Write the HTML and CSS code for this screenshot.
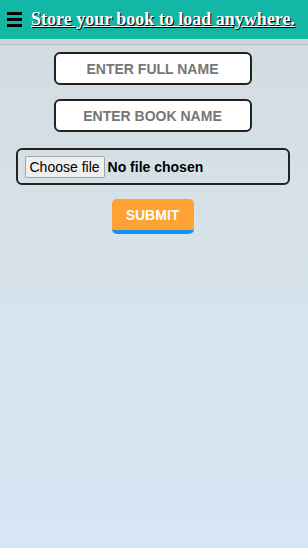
FILE: index.html
```html
<!DOCTYPE html>
<html lang="en">
<head>
  <meta charset="UTF-8">
  <meta name="viewport" content="width=device-width, initial-scale=1.0">
  <title>Store Book</title>
  <link rel="stylesheet" href="styles.css">
</head>
<body>

  <header class="topbar">
    <span class="menu-icon">
      <span></span><span></span><span></span>
    </span>
    <a class="title" href="#">Store your book to load anywhere.</a>
  </header>

  <form class="book-form">
    <input class="text-field" type="text" placeholder="ENTER FULL NAME">
    <input class="text-field" type="text" placeholder="ENTER BOOK NAME">
    <div class="file-box">
      <label class="file-btn" for="book-file">Choose file</label>
      <span class="file-name">No file chosen</span>
      <input id="book-file" class="file-input" type="file">
    </div>
    <button type="submit" class="submit-btn">SUBMIT</button>
  </form>

</body>
</html>
```

FILE: styles.css
```css
html {
  min-height: 100%;
  background: linear-gradient(180deg, #d1dbdf 0%, #d7e2ea 45%, #d6e6f5 100%);
}

body {
  margin: 0;
  font-family: 'Liberation Sans', Arial, sans-serif;
}

.topbar {
  display: flex;
  align-items: center;
  height: 39px;
  padding: 0 7px;
  background-color: #13b7a6;
  border-bottom: 5px solid #ccd6d8;
  box-shadow: 0 1px 0 #b3bcbe;
  box-sizing: content-box;
}

.menu-icon {
  display: flex;
  flex-direction: column;
  justify-content: space-between;
  width: 15px;
  height: 15px;
  margin-right: 9px;
}

.menu-icon span {
  display: block;
  height: 3px;
  background-color: #000;
}

.title {
  font-family: 'Liberation Serif', 'Times New Roman', serif;
  font-weight: bold;
  font-size: 18px;
  color: #fff;
  text-decoration: underline;
  text-shadow: 1px 1px 0 #000;
  white-space: nowrap;
}

.book-form {
  display: flex;
  flex-direction: column;
  align-items: center;
  padding: 8px 3px 0 0;
}

.text-field {
  width: 198px;
  height: 33px;
  box-sizing: border-box;
  margin-bottom: 14px;
  border: 2px solid #222;
  border-radius: 6px;
  background-color: #fff;
  text-align: center;
  font-family: 'Liberation Sans', Arial, sans-serif;
  font-size: 14px;
  font-weight: bold;
}

.text-field::placeholder {
  color: #767676;
}

.file-box {
  width: 274px;
  height: 37px;
  box-sizing: border-box;
  margin-top: 2px;
  padding: 0 7px;
  display: flex;
  align-items: center;
  gap: 3px;
  border: 2px solid #222;
  border-radius: 6px;
  font-size: 14px;
  color: #000;
}

.file-btn {
  padding: 2px 4px;
  background-color: #efefef;
  border: 1px solid #a5a5a5;
  border-radius: 2px;
  font-size: 14px;
  color: #000;
  cursor: pointer;
}

.file-name {
  font-weight: bold;
}

.file-input {
  display: none;
}

.submit-btn {
  margin-top: 14px;
  width: 82px;
  height: 35px;
  padding: 0;
  background-color: #ffa233;
  color: #fff;
  border: none;
  border-bottom: 4px solid #1493f5;
  border-radius: 5px;
  font-family: 'Liberation Sans', Arial, sans-serif;
  font-size: 14px;
  font-weight: bold;
  cursor: pointer;
}
```
